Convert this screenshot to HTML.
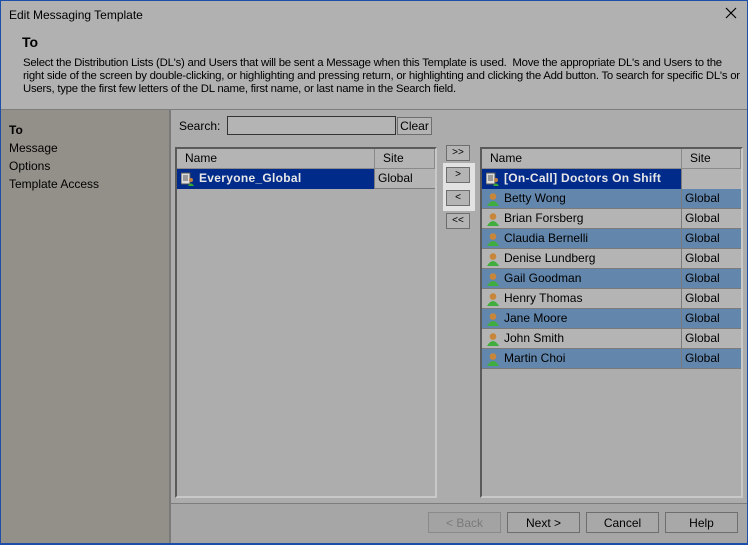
<!DOCTYPE html>
<html><head><style>
*{box-sizing:border-box;margin:0;padding:0}
body{width:748px;height:545px;overflow:hidden;font-family:"Liberation Sans",sans-serif;font-size:12px;color:#000;background:#b1b1b1;position:relative}
.a{position:absolute}
.win{left:0;top:0;width:748px;height:545px;border:1px solid #1e4fa8;border-bottom:2px solid #1e4fa8}
.btn{position:absolute;background:#b4b4b4;border:1px solid #6e6e6e;text-align:center;line-height:20px;font-size:12px}
.list{background:#adadad;border:2px solid #5a5a5a;border-right-color:#c8c8c8;border-bottom-color:#c8c8c8}
.hdr{position:absolute;height:20px;line-height:19px;background:#b4b4b4;border-right:1px solid #8a8a8a;border-bottom:1px solid #8a8a8a;padding-left:8px}
.row{position:absolute;left:0;height:20px;line-height:19px;border-bottom:1px solid #7a7a7a}
.row .n{position:absolute;left:0;top:0;height:20px;padding-left:22px;border-right:1px solid #7a7a7a}
.row .s{position:absolute;top:0;padding-left:3px}
.ic{position:absolute;left:4px;top:3px;width:14px;height:14px}
</style></head><body>
<div class="a win"></div>
<div class="a" style="left:9px;top:8px;font-size:12px">Edit Messaging Template</div>
<svg class="a" style="left:725px;top:7px" width="12" height="12"><path d="M1 1L11 11M11 1L1 11" stroke="#000" stroke-width="1.2"/></svg>
<div class="a" style="left:22px;top:34px;font-size:14px;font-weight:bold">To</div>
<div class="a" style="left:23px;top:57px;width:722px;font-size:11.4px;line-height:13px;letter-spacing:-0.25px">Select the Distribution Lists (DL's) and Users that will be sent a Message when this Template is used.&nbsp; Move the appropriate DL's and Users to the right side of the screen by double-clicking, or highlighting and pressing return, or highlighting and clicking the Add button. To search for specific DL's or Users, type the first few letters of the DL name, first name, or last name in the Search field.</div>
<div class="a" style="left:1px;top:109px;width:746px;height:1px;background:#7d7d7d"></div>
<div class="a" style="left:1px;top:110px;width:168px;height:433px;background:#939089"></div>
<div class="a" style="left:169px;top:110px;width:2px;height:433px;background:#7a7a7a"></div>
<div class="a" style="left:9px;top:123px;font-weight:bold">To</div>
<div class="a" style="left:9px;top:141px">Message</div>
<div class="a" style="left:9px;top:159px">Options</div>
<div class="a" style="left:9px;top:177px">Template Access</div>
<div class="a" style="left:171px;top:110px;width:576px;height:393px;background:#acacac"></div>
<div class="a" style="left:171px;top:503px;width:576px;height:1px;background:#7d7d7d"></div>
<div class="a" style="left:171px;top:504px;width:576px;height:39px;background:#a6a6a6"></div>
<div class="a" style="left:179px;top:119px">Search:</div>
<div class="a" style="left:227px;top:116px;width:169px;height:19px;background:#b4b4b4;border:1px solid #333"></div>
<div class="btn" style="left:397px;top:117px;width:35px;height:18px;line-height:16px">Clear</div>

<div class="a list" style="left:175px;top:147px;width:262px;height:351px">
<div class="hdr" style="left:0;top:0;width:198px">Name</div>
<div class="hdr" style="left:198px;top:0;width:60px">Site</div>
<div class="row" style="top:20px;width:258px">
<div class="n" style="width:198px;background:#002b8a;color:#e8e8e8;font-weight:bold;letter-spacing:.3px"><svg class="ic" viewBox="0 0 14 14"><rect x="0" y="1" width="9" height="11" fill="#ddd" stroke="#555"/><path d="M2 4h5M2 6h5M2 8h5" stroke="#555"/><circle cx="10" cy="8" r="2" fill="#c08040"/><path d="M7 14q3-5 6 0z" fill="#3a3"/></svg>Everyone_Global</div>
<div class="s" style="left:198px;width:60px;background:#b4b4b4">Global</div></div>
</div>

<div class="a" style="left:443px;top:163px;width:32px;height:48px;background:#e2e2e2"></div>
<div class="btn" style="left:446px;top:145px;width:24px;height:16px;line-height:14px;font-size:10px">&gt;&gt;</div>
<div class="btn" style="left:446px;top:167px;width:24px;height:16px;line-height:14px;font-size:10px">&gt;</div>
<div class="btn" style="left:446px;top:190px;width:24px;height:16px;line-height:14px;font-size:10px">&lt;</div>
<div class="btn" style="left:446px;top:213px;width:24px;height:16px;line-height:14px;font-size:10px">&lt;&lt;</div>

<div class="a list" style="left:480px;top:147px;width:263px;height:351px">
<div class="hdr" style="left:0;top:0;width:200px">Name</div>
<div class="hdr" style="left:200px;top:0;width:59px">Site</div>
<div class="row" style="top:20px;width:259px">
<div class="n" style="width:200px;background:#002b8a;color:#e8e8e8;font-weight:bold;letter-spacing:.3px"><svg class="ic" viewBox="0 0 14 14"><rect x="0" y="1" width="9" height="11" fill="#ddd" stroke="#555"/><path d="M2 4h5M2 6h5M2 8h5" stroke="#555"/><circle cx="10" cy="8" r="2" fill="#c08040"/><path d="M7 14q3-5 6 0z" fill="#3a3"/></svg>[On-Call] Doctors On Shift</div>
<div class="s" style="left:200px;width:59px;height:20px;background:#b4b4b4"></div></div>
</div>
<div class="a" style="left:482px;top:189px;width:259px">
<div class="row" style="top:0;width:259px;background:#6286ac"><div class="n" style="width:200px"><svg class="ic" viewBox="0 0 14 14"><circle cx="7" cy="4.5" r="3.3" fill="#c8863a"/><path d="M1 14q6-10 12 0z" fill="#3fae3f"/></svg>Betty Wong</div><div class="s" style="left:200px">Global</div></div>
<div class="row" style="top:20px;width:259px;background:#b4b4b4"><div class="n" style="width:200px"><svg class="ic" viewBox="0 0 14 14"><circle cx="7" cy="4.5" r="3.3" fill="#c8863a"/><path d="M1 14q6-10 12 0z" fill="#3fae3f"/></svg>Brian Forsberg</div><div class="s" style="left:200px">Global</div></div>
<div class="row" style="top:40px;width:259px;background:#6286ac"><div class="n" style="width:200px"><svg class="ic" viewBox="0 0 14 14"><circle cx="7" cy="4.5" r="3.3" fill="#c8863a"/><path d="M1 14q6-10 12 0z" fill="#3fae3f"/></svg>Claudia Bernelli</div><div class="s" style="left:200px">Global</div></div>
<div class="row" style="top:60px;width:259px;background:#b4b4b4"><div class="n" style="width:200px"><svg class="ic" viewBox="0 0 14 14"><circle cx="7" cy="4.5" r="3.3" fill="#c8863a"/><path d="M1 14q6-10 12 0z" fill="#3fae3f"/></svg>Denise Lundberg</div><div class="s" style="left:200px">Global</div></div>
<div class="row" style="top:80px;width:259px;background:#6286ac"><div class="n" style="width:200px"><svg class="ic" viewBox="0 0 14 14"><circle cx="7" cy="4.5" r="3.3" fill="#c8863a"/><path d="M1 14q6-10 12 0z" fill="#3fae3f"/></svg>Gail Goodman</div><div class="s" style="left:200px">Global</div></div>
<div class="row" style="top:100px;width:259px;background:#b4b4b4"><div class="n" style="width:200px"><svg class="ic" viewBox="0 0 14 14"><circle cx="7" cy="4.5" r="3.3" fill="#c8863a"/><path d="M1 14q6-10 12 0z" fill="#3fae3f"/></svg>Henry Thomas</div><div class="s" style="left:200px">Global</div></div>
<div class="row" style="top:120px;width:259px;background:#6286ac"><div class="n" style="width:200px"><svg class="ic" viewBox="0 0 14 14"><circle cx="7" cy="4.5" r="3.3" fill="#c8863a"/><path d="M1 14q6-10 12 0z" fill="#3fae3f"/></svg>Jane Moore</div><div class="s" style="left:200px">Global</div></div>
<div class="row" style="top:140px;width:259px;background:#b4b4b4"><div class="n" style="width:200px"><svg class="ic" viewBox="0 0 14 14"><circle cx="7" cy="4.5" r="3.3" fill="#c8863a"/><path d="M1 14q6-10 12 0z" fill="#3fae3f"/></svg>John Smith</div><div class="s" style="left:200px">Global</div></div>
<div class="row" style="top:160px;width:259px;background:#6286ac"><div class="n" style="width:200px"><svg class="ic" viewBox="0 0 14 14"><circle cx="7" cy="4.5" r="3.3" fill="#c8863a"/><path d="M1 14q6-10 12 0z" fill="#3fae3f"/></svg>Martin Choi</div><div class="s" style="left:200px">Global</div></div>
</div>

<div class="btn" style="left:428px;top:512px;width:73px;height:21px;color:#7a7a7a;background:#a3a3a3;border-color:#8a8a8a">&lt; Back</div>
<div class="btn" style="left:507px;top:512px;width:73px;height:21px;background:#a8a8a8">Next &gt;</div>
<div class="btn" style="left:586px;top:512px;width:73px;height:21px;background:#a8a8a8">Cancel</div>
<div class="btn" style="left:665px;top:512px;width:73px;height:21px;background:#a8a8a8">Help</div>
</body></html>
